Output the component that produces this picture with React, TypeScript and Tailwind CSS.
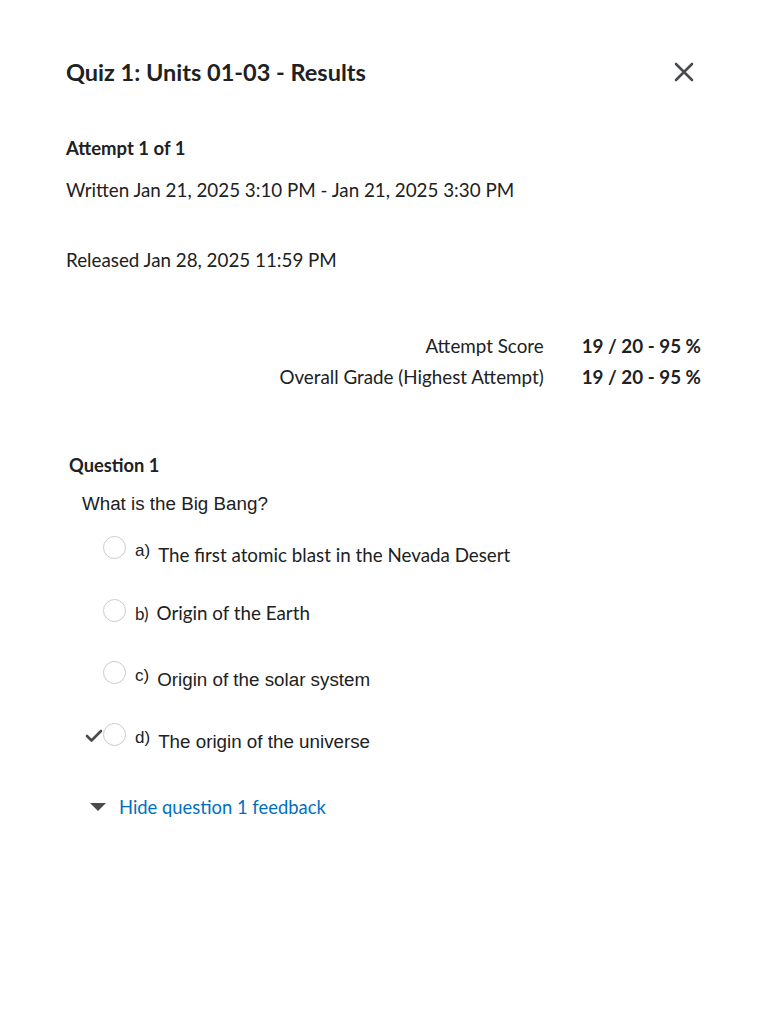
import React from "react";

const options = [
  { key: "a)", text: "The first atomic blast in the Nevada Desert", lato: true, h: "h-[63px]", pt: "pt-[7px]", selected: false },
  { key: "b)", text: "Origin of the Earth", lato: true, h: "h-[62px]", pt: "pt-[2px]", selected: false },
  { key: "c)", text: "Origin of the solar system", lato: false, h: "h-[62px]", pt: "pt-[7px]", selected: false },
  { key: "d)", text: "The origin of the universe", lato: false, h: "h-[62px]", pt: "pt-[7px]", selected: true },
];

export default function App() {
  return (
    <div className="min-h-[1024px] w-[768px] bg-white font-['Lato','Liberation_Sans',sans-serif] text-[#202122]">
      <div className="flex items-center justify-between pl-[66px] pr-[73px] pt-[58px]">
        <h1 className="text-[23.5px] font-bold leading-7">Quiz 1: Units 01-03 - Results</h1>
        <svg width="22" height="22" viewBox="0 0 22 22" className="text-[#494c4e]">
          <path d="M3 3 L19 19 M19 3 L3 19" stroke="currentColor" strokeWidth="2.6" strokeLinecap="round" />
        </svg>
      </div>

      <div className="mt-[50px] pl-[66px]">
        <h2 className="text-[18.5px] font-bold leading-6">Attempt 1 of 1</h2>
        <p className="mt-[18px] text-[18.8px] leading-6">Written Jan 21, 2025 3:10 PM - Jan 21, 2025 3:30 PM</p>
        <p className="mt-[46px] text-[18.8px] leading-6">Released Jan 28, 2025 11:59 PM</p>
      </div>

      <div className="mt-[62px] flex justify-end pr-[67px] text-[18.8px] leading-6">
        <div className="flex flex-col items-end gap-[7px]">
          <span>Attempt Score</span>
          <span>Overall Grade (Highest Attempt)</span>
        </div>
        <div className="ml-[38px] flex flex-col gap-[7px] font-bold">
          <span>19 / 20 - 95 %</span>
          <span>19 / 20 - 95 %</span>
        </div>
      </div>

      <div className="mt-[64px] pl-[69px]">
        <h3 className="text-[18.3px] font-bold leading-6">Question 1</h3>
        <p className="ml-[13px] mt-[15px] font-['Liberation_Sans',Arial,sans-serif] text-[18.8px] leading-6">What is the Big Bang?</p>

        <div className="mt-[20px]">
          {options.map((o) => (
            <div key={o.key} className={`relative flex items-start pl-[34px] ${o.h}`}>
              {o.selected && (
                <svg width="18" height="14" viewBox="0 0 18 14" className="absolute left-[16px] top-[6px]">
                  <path d="M2 7 L6.5 11.5 L16 2" fill="none" stroke="#494c4e" strokeWidth="2.6" strokeLinecap="round" strokeLinejoin="round" />
                </svg>
              )}
              <span className="h-[23px] w-[23px] shrink-0 rounded-full border border-[#c9cbcd] bg-white" />
              <span className={`ml-[9px] pt-[3px] text-[17px] leading-6 ${o.key === "b)" ? "" : "font-['Liberation_Sans',Arial,sans-serif]"}`}>{o.key}</span>
              <span className={`ml-[8px] text-[18.8px] leading-6 ${o.pt} ${o.lato ? "" : "font-['Liberation_Sans',Arial,sans-serif]"}`}>{o.text}</span>
            </div>
          ))}
        </div>

        <div className="ml-[20px] mt-[10px] flex items-center">
          <svg width="18" height="10" viewBox="0 0 18 10">
            <path d="M1 1 L17 1 L9 9 Z" fill="#494c4e" />
          </svg>
          <a className="ml-[12px] text-[18.4px] leading-6 text-[#006fbf]">Hide question 1 feedback</a>
        </div>
      </div>
    </div>
  );
}
